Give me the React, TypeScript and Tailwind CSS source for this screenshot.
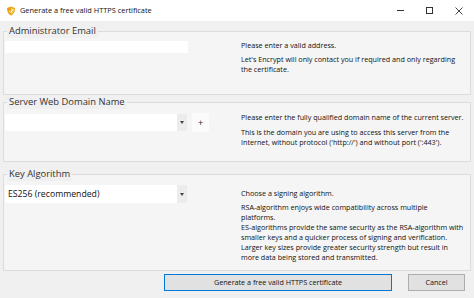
const font = { fontFamily: '"Open Sans", "Noto Sans", sans-serif' };

function Shield() {
  return (
    <svg width="10" height="10" viewBox="0 0 10 10">
      <path d="M5 0.5 L9 2 C9 6 7.5 8.3 5 9.6 C2.5 8.3 1 6 1 2 Z" fill="#e8a317" />
      <path d="M5 1.6 L8 2.7 C8 5.8 6.9 7.6 5 8.5 Z" fill="#f6c94a" />
      <path d="M3.2 5 L4.6 6.3 L6.9 3.6" stroke="#fff" strokeWidth="1" fill="none" />
    </svg>
  );
}

function TitleBar() {
  return (
    <div className="flex h-[21px] items-center bg-white">
      <div className="ml-[6px] flex items-center">
        <Shield />
      </div>
      <span className="ml-[4px] text-[7.4px] text-[#111]">Generate a free valid HTTPS certificate</span>
      <div className="ml-auto flex h-full items-center">
        <div className="flex h-full w-[28px] items-center justify-center">
          <div className="h-px w-[7px] bg-[#333]" />
        </div>
        <div className="flex h-full w-[30px] items-center justify-center">
          <div className="h-[7px] w-[7px] border border-[#333]" />
        </div>
        <div className="flex h-full w-[30px] items-center justify-center">
          <svg width="8" height="8" viewBox="0 0 8 8">
            <path d="M0.5 0.5 L7.5 7.5 M7.5 0.5 L0.5 7.5" stroke="#333" strokeWidth="0.9" />
          </svg>
        </div>
      </div>
    </div>
  );
}

function Arrow() {
  return (
    <div className="flex w-[10px] items-center justify-center bg-[#ececec]">
      <svg width="4" height="3" viewBox="0 0 4 3">
        <path d="M0 0 L4 0 L2 3 Z" fill="#444" />
      </svg>
    </div>
  );
}

function Group({
  title,
  className,
  height,
  left,
  children,
}: {
  title: string;
  className: string;
  height: string;
  left: React.ReactNode;
  children: React.ReactNode;
}) {
  return (
    <fieldset className={`mx-[3px] border border-[#dcdcdc] bg-[#f5f5f5] ${className}`}>
      <legend className="ml-[3px] bg-[#f0f0f0] px-[2px] text-[9.4px] leading-[14px] text-[#333]">{title}</legend>
      <div className={`grid grid-cols-[237px_1fr] ${height}`}>
        <div>{left}</div>
        <div className="text-[7.2px] leading-[10px] whitespace-nowrap text-[#111]">{children}</div>
      </div>
    </fieldset>
  );
}

export default function App() {
  return (
    <div className="h-[298px] w-[474px] overflow-hidden bg-[#f0f0f0]" style={font}>
      <TitleBar />
      <div className="pt-[3px]">
        <Group
          title="Administrator Email"
          className=""
          height="h-[56px]"
          left={<div className="mt-[3px] ml-px h-[12px] w-[183px] bg-white" />}
        >
          <p className="mt-[2px]">Please enter a valid address.</p>
          <p className="mt-[4px]">
            Let's Encrypt will only contact you if required and only regarding
            <br />
            the certificate.
          </p>
        </Group>

        <Group
          title="Server Web Domain Name"
          className="mt-0"
          height="h-[52px]"
          left={
            <div className="mt-[5px] ml-px flex items-start gap-[5px]">
              <div className="flex h-[17px] w-[182px] bg-white">
                <div className="flex-1" />
                <Arrow />
              </div>
              <div className="-mt-px flex h-[19px] w-[17px] items-center justify-center bg-[#fbfbfb] text-[9px] text-[#222]">
                +
              </div>
            </div>
          }
        >
          <p className="mt-[3px]">Please enter the fully qualified domain name of the current server.</p>
          <p className="mt-[5px]">
            This is the domain you are using to access this server from the
            <br />
            Internet, without protocol ('http://') and without port (':443').
          </p>
        </Group>

        <Group
          title="Key Algorithm"
          className="mt-[5px]"
          height="h-[89px]"
          left={
            <div className="mt-[4px] ml-px flex h-[18px] w-[182px] bg-white">
              <span className="flex-1 pl-[3px] text-[8.7px] leading-[18px] text-[#111]">ES256 (recommended)</span>
              <Arrow />
            </div>
          }
        >
          <p className="mt-[7px]">Choose a signing algorithm.</p>
          <p className="mt-[4px]">
            RSA-algorithm enjoys wide compatibility across multiple
            <br />
            platforms.
            <br />
            ES-algorithms provide the same security as the RSA-algorithm with
            <br />
            smaller keys and a quicker process of signing and verification.
            <br />
            Larger key sizes provide greater security strength but result in
            <br />
            more data being stored and transmitted.
          </p>
        </Group>
      </div>

      <div className="flex justify-end gap-[16px] pt-[3px] pr-[9px]">
        <button className="h-[17px] w-[228px] border border-[#0078d7] bg-[#e1e1e1] text-[7.2px] text-[#111]">
          Generate a free valid HTTPS certificate
        </button>
        <button className="h-[17px] w-[57px] border border-[#adadad] bg-[#e1e1e1] text-[7.2px] text-[#111]">
          Cancel
        </button>
      </div>
    </div>
  );
}
